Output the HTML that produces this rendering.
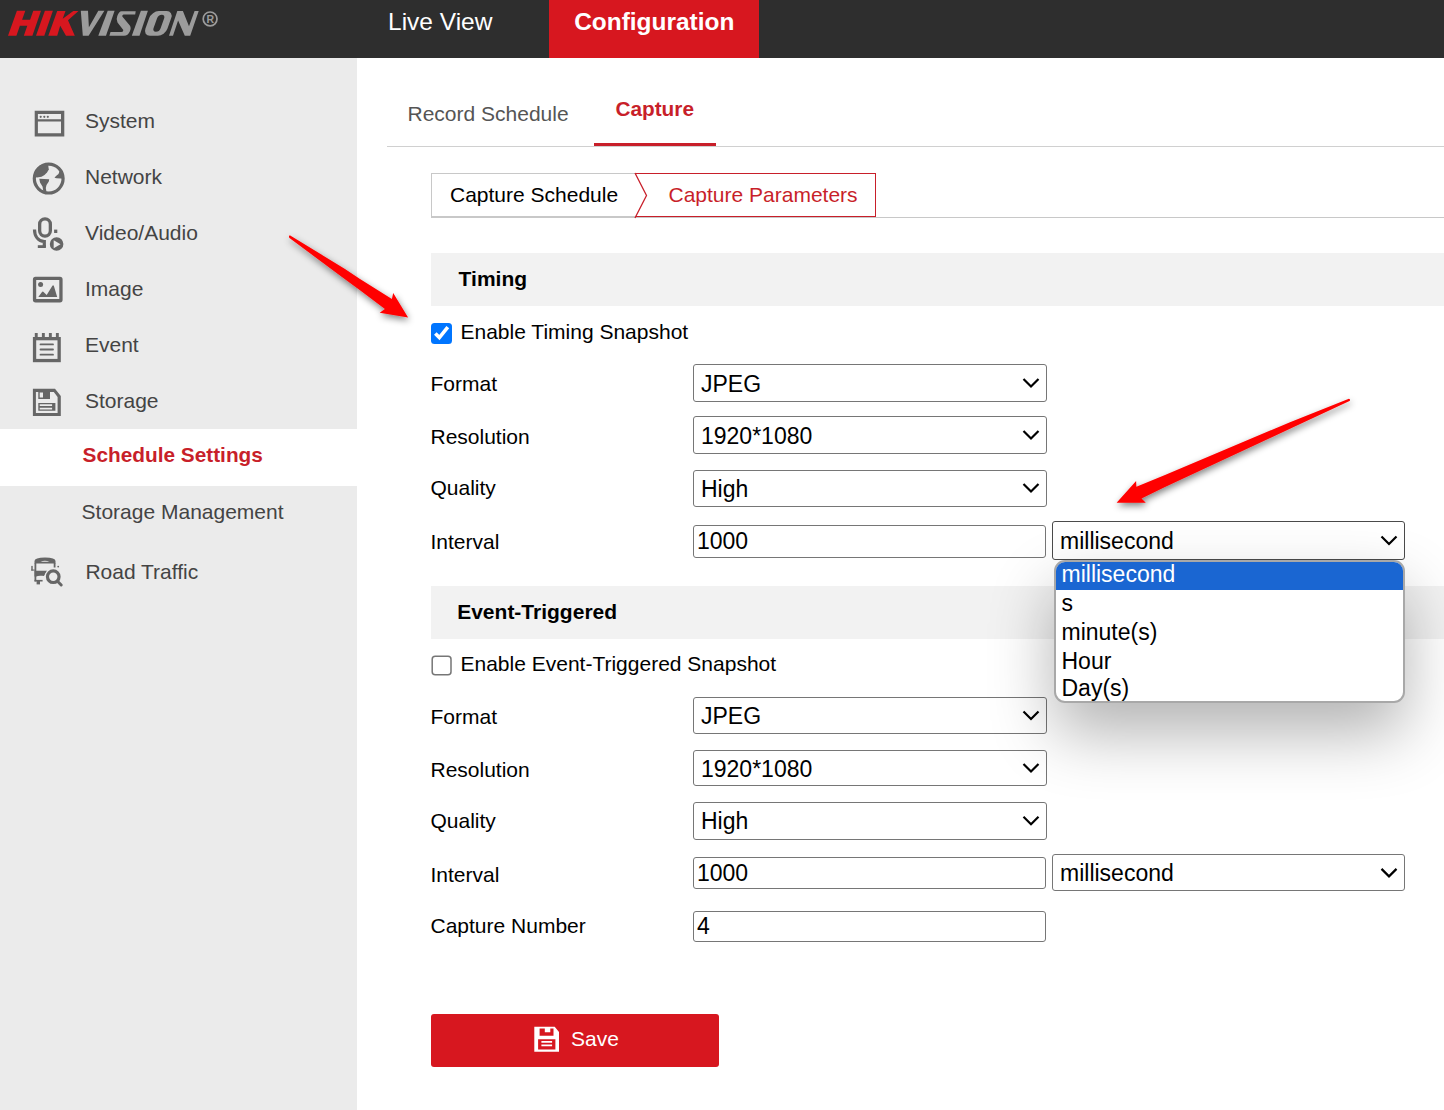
<!DOCTYPE html>
<html><head><meta charset="utf-8"><title>Hikvision Capture</title>
<style>
html,body{margin:0;padding:0;}
body{width:1444px;height:1110px;position:relative;overflow:hidden;background:#fff;font-family:"Liberation Sans",sans-serif;}
.t{position:absolute;white-space:nowrap;}
.b{position:absolute;box-sizing:border-box;}
svg{position:absolute;left:0;top:0;}
</style></head><body>
<div class="b" style="left:0px;top:0px;width:1444px;height:58px;background:#2e2e2e;"></div>
<div class="b" style="left:549px;top:0px;width:210px;height:58px;background:#d7171f;"></div>
<div class="b" style="left:0px;top:58px;width:357px;height:1052px;background:#ebebeb;"></div>
<div class="b" style="left:0px;top:429px;width:357px;height:57px;background:#fff;"></div>
<div class="t" style="left:388.00px;top:10.16px;font-size:24.5px;line-height:24.5px;color:#fff;">Live View</div>
<div class="t" style="left:574.20px;top:9.80px;font-size:24.45px;line-height:24.45px;font-weight:700;color:#fff;">Configuration</div>
<div class="t" style="left:85.00px;top:109.92px;font-size:21px;line-height:21px;color:#444;">System</div>
<div class="t" style="left:85.00px;top:165.92px;font-size:21px;line-height:21px;color:#444;">Network</div>
<div class="t" style="left:85.00px;top:221.92px;font-size:21px;line-height:21px;color:#444;">Video/Audio</div>
<div class="t" style="left:85.00px;top:278.12px;font-size:21px;line-height:21px;color:#444;">Image</div>
<div class="t" style="left:85.00px;top:334.32px;font-size:21px;line-height:21px;color:#444;">Event</div>
<div class="t" style="left:85.00px;top:389.72px;font-size:21px;line-height:21px;color:#444;">Storage</div>
<div class="t" style="left:82.60px;top:444.69px;font-size:20.8px;line-height:20.8px;font-weight:700;color:#c81f2a;">Schedule Settings</div>
<div class="t" style="left:81.60px;top:501.42px;font-size:21px;line-height:21px;color:#444;">Storage Management</div>
<div class="t" style="left:85.40px;top:560.52px;font-size:21px;line-height:21px;color:#444;">Road Traffic</div>
<div class="t" style="left:407.50px;top:103.02px;font-size:21px;line-height:21px;color:#555;">Record Schedule</div>
<div class="t" style="left:615.40px;top:99.09px;font-size:20.8px;line-height:20.8px;font-weight:700;color:#c81f2a;">Capture</div>
<div class="b" style="left:387px;top:146px;width:1057px;height:1px;background:#d0d0d0;"></div>
<div class="b" style="left:594px;top:143px;width:122px;height:3px;background:#c81f2a;"></div>
<div class="b" style="left:431px;top:217px;width:1013px;height:1px;background:#c8c8c8;"></div>
<div class="b" style="left:431px;top:173px;width:205px;height:45px;border:1px solid #c8c8c8;border-right:none;border-bottom:2px solid #c8c8c8;background:#fff;"></div>
<div class="b" style="left:635px;top:173px;width:241px;height:44px;border:1px solid #c81f2a;border-left:none;background:#fff;"></div>
<div class="t" style="left:450.00px;top:184.12px;font-size:21px;line-height:21px;color:#000;">Capture Schedule</div>
<div class="t" style="left:668.50px;top:184.22px;font-size:21px;line-height:21px;color:#c81f2a;">Capture Parameters</div>
<div class="b" style="left:431px;top:253px;width:1013px;height:53px;background:#f2f2f2;"></div>
<div class="t" style="left:458.60px;top:268.02px;font-size:21px;line-height:21px;font-weight:700;color:#000;">Timing</div>
<div class="t" style="left:460.50px;top:320.52px;font-size:21px;line-height:21px;color:#000;">Enable Timing Snapshot</div>
<div class="t" style="left:430.50px;top:373.22px;font-size:21px;line-height:21px;color:#000;">Format</div>
<div class="t" style="left:430.50px;top:426.02px;font-size:21px;line-height:21px;color:#000;">Resolution</div>
<div class="t" style="left:430.50px;top:477.32px;font-size:21px;line-height:21px;color:#000;">Quality</div>
<div class="t" style="left:430.50px;top:531.42px;font-size:21px;line-height:21px;color:#000;">Interval</div>
<div class="b" style="left:431px;top:585.5px;width:1013px;height:53.0px;background:#f2f2f2;"></div>
<div class="t" style="left:457.20px;top:601.22px;font-size:21px;line-height:21px;font-weight:700;color:#000;">Event-Triggered</div>
<div class="t" style="left:460.50px;top:653.02px;font-size:21px;line-height:21px;color:#000;">Enable Event-Triggered Snapshot</div>
<div class="t" style="left:430.50px;top:705.72px;font-size:21px;line-height:21px;color:#000;">Format</div>
<div class="t" style="left:430.50px;top:758.52px;font-size:21px;line-height:21px;color:#000;">Resolution</div>
<div class="t" style="left:430.50px;top:809.82px;font-size:21px;line-height:21px;color:#000;">Quality</div>
<div class="t" style="left:430.50px;top:863.92px;font-size:21px;line-height:21px;color:#000;">Interval</div>
<div class="t" style="left:430.50px;top:915.42px;font-size:21px;line-height:21px;color:#000;">Capture Number</div>
<div class="b" style="left:693px;top:364px;width:354px;height:38px;border:1.3px solid #767676;border-radius:3px;background:#fff;"></div>
<div class="t" style="left:701.00px;top:372.53px;font-size:23px;line-height:23px;color:#000;">JPEG</div>
<svg width="1444" height="1110" style="pointer-events:none"><path d="M1023.5 379.0 L1031 386.5 L1038.5 379.0" fill="none" stroke="#000" stroke-width="2.2"/></svg>
<div class="b" style="left:693px;top:416px;width:354px;height:38px;border:1.3px solid #767676;border-radius:3px;background:#fff;"></div>
<div class="t" style="left:701.00px;top:424.53px;font-size:23px;line-height:23px;color:#000;">1920*1080</div>
<svg width="1444" height="1110" style="pointer-events:none"><path d="M1023.5 431.0 L1031 438.5 L1038.5 431.0" fill="none" stroke="#000" stroke-width="2.2"/></svg>
<div class="b" style="left:693px;top:469.5px;width:354px;height:37.10000000000002px;border:1.3px solid #767676;border-radius:3px;background:#fff;"></div>
<div class="t" style="left:701.00px;top:477.58px;font-size:23px;line-height:23px;color:#000;">High</div>
<svg width="1444" height="1110" style="pointer-events:none"><path d="M1023.5 484.05 L1031 491.55 L1038.5 484.05" fill="none" stroke="#000" stroke-width="2.2"/></svg>
<div class="b" style="left:693px;top:525px;width:353px;height:33px;border:1.3px solid #767676;border-radius:3px;background:#fff;"></div>
<div class="t" style="left:697.00px;top:530.23px;font-size:23px;line-height:23px;color:#000;">1000</div>
<div class="b" style="left:1052px;top:521px;width:353px;height:39px;border:1.3px solid #4a4a4a;border-radius:3px;background:#fff;"></div>
<div class="t" style="left:1060.00px;top:530.03px;font-size:23px;line-height:23px;color:#000;">millisecond</div>
<svg width="1444" height="1110" style="pointer-events:none"><path d="M1381.5 536.5 L1389 544.0 L1396.5 536.5" fill="none" stroke="#000" stroke-width="2.2"/></svg>
<div class="b" style="left:693px;top:697px;width:354px;height:37px;border:1.3px solid #767676;border-radius:3px;background:#fff;"></div>
<div class="t" style="left:701.00px;top:705.03px;font-size:23px;line-height:23px;color:#000;">JPEG</div>
<svg width="1444" height="1110" style="pointer-events:none"><path d="M1023.5 711.5 L1031 719.0 L1038.5 711.5" fill="none" stroke="#000" stroke-width="2.2"/></svg>
<div class="b" style="left:693px;top:750px;width:354px;height:36px;border:1.3px solid #767676;border-radius:3px;background:#fff;"></div>
<div class="t" style="left:701.00px;top:757.53px;font-size:23px;line-height:23px;color:#000;">1920*1080</div>
<svg width="1444" height="1110" style="pointer-events:none"><path d="M1023.5 764.0 L1031 771.5 L1038.5 764.0" fill="none" stroke="#000" stroke-width="2.2"/></svg>
<div class="b" style="left:693px;top:802px;width:354px;height:37.5px;border:1.3px solid #767676;border-radius:3px;background:#fff;"></div>
<div class="t" style="left:701.00px;top:810.28px;font-size:23px;line-height:23px;color:#000;">High</div>
<svg width="1444" height="1110" style="pointer-events:none"><path d="M1023.5 816.75 L1031 824.25 L1038.5 816.75" fill="none" stroke="#000" stroke-width="2.2"/></svg>
<div class="b" style="left:693px;top:857.3px;width:353px;height:32.200000000000045px;border:1.3px solid #767676;border-radius:3px;background:#fff;"></div>
<div class="t" style="left:697.00px;top:862.13px;font-size:23px;line-height:23px;color:#000;">1000</div>
<div class="b" style="left:1052px;top:854.4px;width:353px;height:37.0px;border:1.3px solid #767676;border-radius:3px;background:#fff;"></div>
<div class="t" style="left:1060.00px;top:862.43px;font-size:23px;line-height:23px;color:#000;">millisecond</div>
<svg width="1444" height="1110" style="pointer-events:none"><path d="M1381.5 868.9 L1389 876.4 L1396.5 868.9" fill="none" stroke="#000" stroke-width="2.2"/></svg>
<div class="b" style="left:693px;top:910.5px;width:353px;height:31.700000000000045px;border:1.3px solid #767676;border-radius:3px;background:#fff;"></div>
<div class="t" style="left:697.00px;top:915.08px;font-size:23px;line-height:23px;color:#000;">4</div>
<div class="b" style="left:431px;top:1014px;width:288px;height:52.5px;background:#d7171f;border-radius:3px;"></div>
<div class="t" style="left:571.00px;top:1028.32px;font-size:21px;line-height:21px;color:#fff;">Save</div>
<div class="b" style="left:1054px;top:560px;width:351px;height:143px;background:#fff;border:2px solid #a8a8a8;border-radius:11px;box-shadow:0 30px 64px rgba(0,0,0,0.30);"></div>
<div class="b" style="left:1056px;top:561.5px;width:347px;height:28.5px;background:#1a66d2;border-radius:9px 9px 0 0;"></div>
<div class="t" style="left:1061.50px;top:563.13px;font-size:23px;line-height:23px;color:#fff;">millisecond</div>
<div class="t" style="left:1061.50px;top:592.23px;font-size:23px;line-height:23px;color:#000;">s</div>
<div class="t" style="left:1061.50px;top:620.53px;font-size:23px;line-height:23px;color:#000;">minute(s)</div>
<div class="t" style="left:1061.50px;top:649.73px;font-size:23px;line-height:23px;color:#000;">Hour</div>
<div class="t" style="left:1061.50px;top:676.83px;font-size:23px;line-height:23px;color:#000;">Day(s)</div>
<svg width="1444" height="1110"><defs><filter id="sh" x="-20%" y="-20%" width="140%" height="140%"><feGaussianBlur in="SourceAlpha" stdDeviation="3.5"/><feOffset dx="1" dy="3"/><feComponentTransfer><feFuncA type="linear" slope="0.5"/></feComponentTransfer><feMerge><feMergeNode/><feMergeNode in="SourceGraphic"/></feMerge></filter></defs><path fill="#666" fill-rule="evenodd" d="M34.7 110.8h29.6v25.7h-29.6z M37.9 114.1h23.1v5.1h-23.1z M37.9 121.5h23.1v11.8h-23.1z"/><circle cx="40.7" cy="116.8" r="1.1" fill="#666"/><circle cx="44.3" cy="116.8" r="1.1" fill="#666"/><circle cx="47.8" cy="116.8" r="1.1" fill="#666"/><circle cx="48.7" cy="178.6" r="14.4" fill="none" stroke="#666" stroke-width="3.2"/><clipPath id="gc"><circle cx="48.7" cy="178.6" r="15.5"/></clipPath><g clip-path="url(#gc)"><path fill="#666" d="M34 177 L35 168 L40 164 L48 164 L48.8 169.5 L47 172.5 L44.5 175 L41.5 176.8 L37 177.5 Z"/><path fill="#666" d="M39.3 178.8 L49.2 179.2 L48.8 181.5 L46.5 185 L45.8 188 L46.5 192 L43.5 192 L42.5 186.5 L40 182.5 Z"/><path fill="#666" d="M59.4 171.5 L63 169 L64 179 L60.9 178.6 L56.5 178.3 L54.5 177.7 L56 176 L58.5 174 Z"/></g><rect x="39.65" y="218.95" width="10.7" height="17.1" rx="5.35" fill="none" stroke="#666" stroke-width="3.3"/><path d="M34.5 229.4 C34.5 236.5 38.5 241 44.3 241.5 L44.3 247.5" fill="none" stroke="#666" stroke-width="3.2"/><path d="M37.8 246.6 H45.8" fill="none" stroke="#666" stroke-width="2.8"/><rect x="54.1" y="229.6" width="3.2" height="3.4" fill="#666"/><circle cx="56.6" cy="244" r="7.6" fill="#666" stroke="#ebebeb" stroke-width="1.6"/><path fill="#ebebeb" d="M53.7 240.2 L60.5 244.2 L53.7 248.3 Z"/><rect x="34.55" y="278.45" width="26.4" height="22.3" rx="1" fill="none" stroke="#666" stroke-width="3.3"/><circle cx="40.6" cy="284.4" r="2.5" fill="#666"/><path fill="#666" d="M38.3 297 L41.8 292.2 Q42.8 291 43.8 292.2 L46.7 294.9 L52.4 285.8 Q53.2 284.6 53.9 285.9 L57.2 297 Z"/><rect x="34.55" y="338.65" width="24.6" height="21.9" fill="none" stroke="#666" stroke-width="3.3"/><rect x="34.8" y="333" width="2.9" height="5" fill="#666"/><rect x="41.9" y="333" width="2.9" height="5" fill="#666"/><rect x="48.9" y="333" width="2.9" height="5" fill="#666"/><rect x="55.9" y="333" width="2.9" height="5" fill="#666"/><path d="M40.5 344.4 H53" stroke="#666" stroke-width="1.8" stroke-linecap="round"/><path d="M40.5 349.5 H53" stroke="#666" stroke-width="1.8" stroke-linecap="round"/><path d="M40.5 354.7 H53" stroke="#666" stroke-width="1.8" stroke-linecap="round"/><path fill="#666" fill-rule="evenodd" d="M32.9 388.8 H55 L60.8 396 V416 H32.9 Z M35.9 391.9 H53.8 L57.6 396.9 V413.1 H35.9 Z"/><path fill="#666" fill-rule="evenodd" d="M38.3 391.9 H50 V398.9 H38.3 Z M39.7 392.6 H43 V397.5 H39.7 Z"/><path fill="#666" fill-rule="evenodd" d="M38.3 402.9 H55.4 V410.8 H38.3 Z M39.7 404.3 H52.1 V406.1 H39.7 Z M39.7 407.8 H52.1 V409.6 H39.7 Z"/><path fill="#666" fill-rule="evenodd" d="M34.5 563.6 V561 Q34.5 557.6 45 557.4 Q55.5 557.6 55.5 561 V563.6 Z M40.4 561.3 Q45 560.2 49.5 561.3 Q45 562.4 40.4 561.3 Z"/><rect x="34.5" y="563" width="1.8" height="18.4" fill="#666"/><rect x="53.7" y="563" width="1.8" height="4.5" fill="#666"/><path fill="#666" d="M34.5 570.8 H47 L44 576.1 L42 575.8 Q38 575.5 36.3 576.5 L34.5 576.5 Z"/><rect x="34.5" y="579.9" width="8.1" height="1.6" fill="#666"/><rect x="36.6" y="581" width="3.4" height="3.4" fill="#666"/><rect x="31.3" y="565.9" width="1.4" height="4.7" fill="#666"/><rect x="31.3" y="569.5" width="3.5" height="1.1" fill="#666"/><circle cx="58.2" cy="566.6" r="0.9" fill="#666"/><circle cx="53.25" cy="576.7" r="5.8" fill="none" stroke="#ebebeb" stroke-width="5.5"/><circle cx="53.25" cy="576.7" r="5.8" fill="#ebebeb" stroke="#666" stroke-width="3.2"/><path d="M57.5 581.3 L61.2 585" stroke="#666" stroke-width="3" stroke-linecap="round"/><path d="M635 173 L646.5 195.5 L635 218" fill="#fff" stroke="#c81f2a" stroke-width="1.3"/><rect x="431" y="323" width="21" height="21" rx="3.5" fill="#0075ff"/><path d="M435.3 333.4 L439.4 337.6 L447.8 327.2" fill="none" stroke="#fff" stroke-width="3.6"/><rect x="432.2" y="656.2" width="18.8" height="18.6" rx="3" fill="#fff" stroke="#767676" stroke-width="1.5"/><g filter="url(#sh)"><path fill="#ff0000" d="M289.8 235.3 L345 268.9 L360 278.9 L391.9 298.9 L393.2 293 L408.1 317.6 L379.7 312.7 L384.9 308.9 L360 290.3 L345 279.2 L289.8 238.3 Q288 236.8 289.8 235.3 Z"/></g><g filter="url(#sh)"><path fill="#ff0000" d="M1348.9 398.8 L1290 422.2 L1165 475.1 L1136.4 486.8 L1136.1 481.1 L1116.6 502.7 L1145.8 502.7 L1141.5 498.4 L1165 487 L1290 428.8 L1349.5 401 Q1351 399.5 1348.9 398.8 Z"/></g><path fill="#fff" fill-rule="evenodd" d="M534.3 1026.8 H554.7 L559 1032 V1051.7 H534.3 Z M539.6 1028.6 H544.8 V1032.2 H550.3 V1028.6 H553.5 V1035.8 H539.6 Z M538.1 1039.2 H555.4 V1049.5 H538.1 Z"/><path fill="#fff" d="M541.4 1041 H552.1 V1042.8 H541.4 Z M541.4 1044.5 H552.1 V1046.2 H541.4 Z"/><path fill="#d7171f" d="M16.9 10.8 L25.3 10.8 L22.1 19.7 L30.1 19.7 L33.3 10.8 L41 10.8 L32.4 35.7 L23.8 35.7 L27.3 25.8 L19.9 25.8 L16.4 35.7 L8 35.7 Z"/><path fill="#d7171f" d="M44.9 10.8 L52.9 10.8 L44.3 35.7 L36 35.7 Z"/><path fill="#d7171f" d="M57.2 11 L65.5 11 L62.7 18.8 L73.3 11 L78.5 11 L68 20.3 L74.8 35.7 L66 35.7 L60.2 25.7 L57.2 35.7 L48.3 35.7 Z"/><path fill="#9c9c9c" d="M80.8 10.8 L88 10.8 L88.9 27.2 L98.3 10.8 L104.4 10.8 L88.6 35.7 L82.8 35.7 Z"/><path fill="#9c9c9c" d="M107.7 10.8 L114.6 10.8 L106 35.7 L98.3 35.7 Z"/><path fill="#9c9c9c" d="M121.5 11.2 L135.7 11.2 L135.2 14.4 L123.5 14.4 Q122 14.6 122.3 16.5 L129.8 25.5 Q131.5 28 129.8 31.5 Q128 35.7 124 35.7 L109.4 35.7 L110.5 32.1 L121.5 32.1 Q123.5 32 123.3 30 L117.5 22.5 Q115.8 19.5 117.3 16 Q119 11.2 121.5 11.2 Z"/><path fill="#9c9c9c" d="M140.9 10.8 L147.9 10.8 L139.5 35.7 L131.8 35.7 Z"/><path fill="#9c9c9c" fill-rule="evenodd" transform="matrix(1,0,-0.357,1,12.78,0)" d="M149.9 11.1 H157.9 A7 7 0 0 1 164.9 18.1 V28.799999999999997 A7 7 0 0 1 157.9 35.8 H149.9 A7 7 0 0 1 142.9 28.799999999999997 V18.1 A7 7 0 0 1 149.9 11.1 Z M154.3 14.7 H154.4 A3.5 3.5 0 0 1 157.9 18.2 V28.2 A3.5 3.5 0 0 1 154.4 31.7 H154.3 A3.5 3.5 0 0 1 150.8 28.2 V18.2 A3.5 3.5 0 0 1 154.3 14.7 Z"/><path fill="#9c9c9c" d="M177.3 11 L182.9 11 L189 26.3 L194.6 11 L198.7 11 L190.2 35.8 L184.8 35.8 L178.1 20.5 L173 35.8 L169 35.8 Z"/><circle cx="210.1" cy="18.9" r="6.9" fill="none" stroke="#9c9c9c" stroke-width="1.7"/><text x="206.4" y="22.9" font-family="Liberation Sans" font-weight="700" font-size="10.5" fill="#9c9c9c">R</text></svg>
</body></html>
